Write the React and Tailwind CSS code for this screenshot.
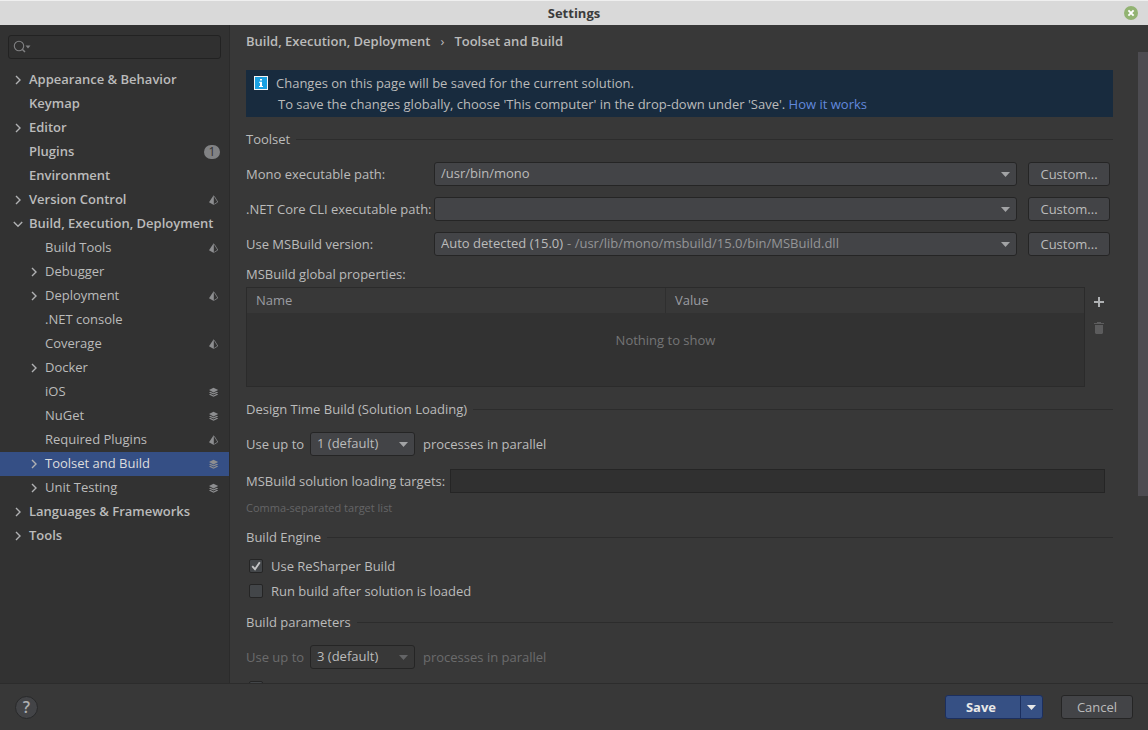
import { useState } from 'react'
import clsx from 'clsx'

const TREE = [
  { label: 'Appearance & Behavior', arrow: 'right' },
  { label: 'Keymap' },
  { label: 'Editor', arrow: 'right' },
  { label: 'Plugins', badge: 1 },
  { label: 'Environment' },
  { label: 'Version Control', arrow: 'right', mark: 'project' },
  { label: 'Build, Execution, Deployment', arrow: 'down' },
  { label: 'Build Tools', child: true, mark: 'project' },
  { label: 'Debugger', child: true, arrow: 'right' },
  { label: 'Deployment', child: true, arrow: 'right', mark: 'project' },
  { label: '.NET console', child: true },
  { label: 'Coverage', child: true, mark: 'project' },
  { label: 'Docker', child: true, arrow: 'right' },
  { label: 'iOS', child: true, mark: 'layers' },
  { label: 'NuGet', child: true, mark: 'layers' },
  { label: 'Required Plugins', child: true, mark: 'project' },
  { label: 'Toolset and Build', child: true, arrow: 'right', mark: 'layers' },
  { label: 'Unit Testing', child: true, arrow: 'right', mark: 'layers' },
  { label: 'Languages & Frameworks', arrow: 'right' },
  { label: 'Tools', arrow: 'right' },
]

function Chevron({ dir }) {
  if (!dir) return null
  return (
    <svg width="10" height="10" viewBox="0 0 10 10" fill="none" stroke="#b0b1b3" strokeWidth="1.4">
      {dir === 'right' ? <path d="M3 1 7 5 3 9" /> : <path d="M.8 3 5 7.2 9.2 3" />}
    </svg>
  )
}

function Mark({ type }) {
  if (type === 'project') {
    return (
      <svg width="10" height="10" viewBox="0 0 10 10">
        <path d="M4.8 0V10L0 7.2Z" fill="#8d8e90" />
        <path d="M5.2 1.2 8.8 7 5.2 9.3" fill="none" stroke="#77787a" strokeWidth="1" />
      </svg>
    )
  }
  if (type === 'layers') {
    return (
      <svg width="10" height="10" viewBox="0 0 10 10" fill="#8d8e90">
        <path d="M4.5 .7 9.2 3.1 4.5 5.5 0 3.1Z" />
        <path d="M0 5.4 1.3 4.7 4.5 6.3 7.8 4.7 9.2 5.4 4.5 7.6Z" />
        <path d="M0 7.5 1.3 6.8 4.5 8.4 7.8 6.8 9.2 7.5 4.5 9.7Z" />
      </svg>
    )
  }
  return null
}

function Caret({ color = '#a2a3a5' }) {
  return (
    <svg className="pointer-events-none shrink-0" width="9" height="5" viewBox="0 0 9 5">
      <path d="M0 0H9L4.5 5Z" fill={color} />
    </svg>
  )
}

function Combo({ id, options, hint, disabled, className }) {
  return (
    <div
      className={clsx(
        'relative flex h-6 items-center rounded-[3px] border border-[#252525]',
        disabled ? 'bg-[#383838]' : 'bg-[#434447]',
        className
      )}
    >
      <select
        id={id}
        disabled={disabled}
        className={clsx(
          'h-full appearance-none bg-transparent pb-0.5 pl-1.5 text-[#bbbbbb] opacity-100 outline-none',
          hint ? 'field-sizing-content' : 'w-full'
        )}
      >
        {options.map(o => <option key={o}>{o}</option>)}
      </select>
      {hint && <span className="truncate pb-0.5 pl-1 text-[#949597]">{hint}</span>}
      <span className="pointer-events-none absolute right-1.5">
        <Caret color={disabled ? '#636466' : undefined} />
      </span>
    </div>
  )
}

function Section({ title, className }) {
  return (
    <div className={clsx('flex items-center gap-1.5', className)}>
      <h2>{title}</h2>
      <div className="h-px flex-1 bg-[#2c2c2c]" />
    </div>
  )
}

function Check({ label, disabled, defaultChecked }) {
  const [on, setOn] = useState(!!defaultChecked)
  return (
    <label className={clsx('flex items-center gap-2 pl-[3px]', disabled && 'text-[#6b6b6c]')}>
      <span className="relative flex size-3.5">
        <input
          type="checkbox"
          checked={on}
          disabled={disabled}
          onChange={e => setOn(e.target.checked)}
          className="size-3.5 appearance-none rounded-[2px] border border-[#252525] bg-[#434649]"
        />
        {on && (
          <svg className="pointer-events-none absolute inset-0" width="14" height="14" viewBox="0 0 14 14" fill="none">
            <path d="M3.2 7.2 6 10.2 10.8 3.2" stroke="#c3c4c5" strokeWidth="1.9" />
          </svg>
        )}
      </span>
      {label}
    </label>
  )
}

function Button({ children, className }) {
  return (
    <button className={clsx('h-6 rounded-[3px] border border-[#252525] bg-[#434447] leading-5 text-[#bbbbbb]', className)}>
      {children}
    </button>
  )
}

function Sidebar() {
  const [selected, setSelected] = useState('Toolset and Build')
  return (
    <aside className="w-[230px] shrink-0 border-r border-[#2b2b2b] bg-[#323232]">
      <label className="mx-2 mt-2.5 flex h-6 items-center rounded-[3px] border border-[#222222] bg-[#303030] pl-1">
        <svg width="18" height="14" viewBox="0 0 18 14" fill="none">
          <circle cx="6" cy="6" r="4.7" stroke="#808183" strokeWidth="1.1" />
          <path d="M9.2 9.2 12 12" stroke="#808183" strokeWidth="1.5" />
          <path d="M12.5 5.5H17.5L15 8.5Z" fill="#808183" />
        </svg>
        <input type="text" aria-label="Search settings" className="min-w-0 flex-1 bg-transparent outline-none" />
      </label>
      <nav className="mt-[9px]">
        {TREE.map(item => (
          <button
            key={item.label}
            onClick={() => setSelected(item.label)}
            className={clsx(
              'flex h-6 w-full items-center pr-2.5 text-left leading-5',
              item.child ? 'pl-[29px]' : 'pl-[13px] font-semibold',
              item.label === selected ? 'bg-[#354f85] text-[#dddddd]' : 'text-[#bbbbbb]'
            )}
          >
            <span className="w-4 shrink-0"><Chevron dir={item.arrow} /></span>
            <span className="flex-1 pb-0.5 whitespace-nowrap">{item.label}</span>
            {item.badge && (
              <span className="-mr-px h-3.5 w-4 rounded-full bg-[#818284] text-center text-xs leading-3.5 font-normal text-[#323232]">
                {item.badge}
              </span>
            )}
            <Mark type={item.mark} />
          </button>
        ))}
      </nav>
    </aside>
  )
}

function Banner() {
  return (
    <div className="flex gap-2 bg-[#182b3e] px-2 pt-[3px] pb-0.5">
      <svg className="mt-[3px] shrink-0" width="14" height="14" viewBox="0 0 14 14">
        <rect x=".5" y=".5" width="13" height="13" fill="#1ba1e2" stroke="#f5f5f5" />
        <path d="M6 3H8V4.6H6ZM5 5.8H8V10H9V11H5V10H6V6.8H5Z" fill="#fff" />
      </svg>
      <p className="leading-[21px]">
        Changes on this page will be saved for the current solution.
        <br />
        <span className="pl-0.5">To save the changes globally, choose 'This computer' in the drop-down under 'Save'. </span>
        <a href="#how" className="text-[#6289dd]">How it works</a>
      </p>
    </div>
  )
}

function PropertiesTable() {
  return (
    <div className="mt-[3px] flex">
      <div className="h-[100px] flex-1 border border-[#2b2b2b] bg-[#323232]">
        <table className="w-full table-fixed text-left">
          <thead>
            <tr className="h-[25px] bg-[#383838] text-[#9b9ca2]">
              <th className="border-r border-[#2f2f2f] pb-0.5 pl-[9px] font-normal">Name</th>
              <th className="pb-0.5 pl-[9px] font-normal">Value</th>
            </tr>
          </thead>
          <tbody>
            <tr>
              <td colSpan="2" className="pt-[17px] text-center text-[#757576]">Nothing to show</td>
            </tr>
          </tbody>
        </table>
      </div>
      <div className="flex w-7 flex-col items-center gap-3 pt-2">
        <button aria-label="Add" className="size-3.5">
          <svg width="14" height="14" viewBox="0 0 14 14" fill="#afb1b3">
            <path d="M6 2H8V6H12V8H8V12H6V8H2V6H6Z" />
          </svg>
        </button>
        <button aria-label="Remove" disabled className="size-3.5">
          <svg width="14" height="14" viewBox="0 0 14 14" fill="#5c5c5d">
            <path d="M5 1H9V2H12V3H2V2H5ZM3 4H11V12L10 13H4L3 12Z" />
          </svg>
        </button>
      </div>
    </div>
  )
}

export default function App() {
  return (
    <div className="flex h-screen flex-col bg-[#383838] font-['Open_Sans',sans-serif] text-[13px] leading-5 text-[#bbbbbb]">
      {/* Title bar */}
      <header className="relative flex h-[25px] shrink-0 items-center justify-center border-t border-[#efefef] bg-[#d9d9d9]">
        <h1 className="font-bold text-[#3c3c3c]">Settings</h1>
        <button aria-label="Close" className="absolute right-2.5">
          <svg width="14" height="14" viewBox="0 0 14 14">
            <circle cx="7" cy="7" r="7" fill="#92b372" />
            <path d="M4.4 4.4 9.6 9.6M9.6 4.4 4.4 9.6" stroke="#fff" strokeWidth="1.9" />
          </svg>
        </button>
      </header>

      <div className="flex min-h-0 flex-1">
        <Sidebar />

        <main className="flex min-w-0 flex-1 flex-col">
          <div className="flex h-[27px] shrink-0 items-end gap-2.5 pb-px pl-4 font-semibold">
            <span>Build, Execution, Deployment</span>
            <span className="font-normal">›</span>
            <span>Toolset and Build</span>
          </div>

          <div className="flex min-h-0 flex-1">
            <div className="min-w-0 flex-1 overflow-hidden pt-[18px] pr-[25px] pl-4">
              <Banner />

              <Section title="Toolset" className="mt-3" />
              <div className="mt-[13px] grid grid-cols-[188px_1fr_82px] items-center gap-y-[11px] pr-[3px]">
                <label htmlFor="mono" className="whitespace-nowrap">Mono executable path:</label>
                <Combo id="mono" options={['/usr/bin/mono']} className="mr-[11px]" />
                <Button>Custom...</Button>
                <label htmlFor="cli" className="whitespace-nowrap">.NET Core CLI executable path:</label>
                <Combo id="cli" options={['']} className="mr-[11px]" />
                <Button>Custom...</Button>
                <label htmlFor="msbuild" className="whitespace-nowrap">Use MSBuild version:</label>
                <Combo
                  id="msbuild"
                  options={['Auto detected (15.0)']}
                  hint="- /usr/lib/mono/msbuild/15.0/bin/MSBuild.dll"
                  className="mr-[11px]"
                />
                <Button>Custom...</Button>
              </div>

              <p className="mt-2">MSBuild global properties:</p>
              <PropertiesTable />

              <Section title="Design Time Build (Solution Loading)" className="mt-3" />
              <div className="mt-[13px] flex items-center">
                <label htmlFor="load-procs" className="w-16 whitespace-nowrap">Use up to</label>
                <Combo id="load-procs" options={['1 (default)', '2', '3', '4']} className="mr-2 w-[105px]" />
                <span>processes in parallel</span>
              </div>
              <div className="mt-[13px] flex items-center pr-2">
                <label htmlFor="targets" className="w-[204px] whitespace-nowrap">MSBuild solution loading targets:</label>
                <input
                  id="targets"
                  type="text"
                  className="h-6 min-w-0 flex-1 border border-[#252525] bg-[#303030] px-1.5 outline-none"
                />
              </div>
              <p className="mt-[5px] text-[11px] leading-5 text-[#656567]">Comma-separated target list</p>

              <Section title="Build Engine" className="mt-[9px]" />
              <div className="mt-[9px] flex flex-col gap-[5px]">
                <Check label="Use ReSharper Build" defaultChecked />
                <Check label="Run build after solution is loaded" />
              </div>

              <Section title="Build parameters" className="mt-[11px]" />
              <div className="mt-[13px] flex items-center text-[#6b6b6c]">
                <label htmlFor="build-procs" className="w-16 whitespace-nowrap">Use up to</label>
                <Combo id="build-procs" options={['3 (default)']} disabled className="mr-2 w-[105px]" />
                <span>processes in parallel</span>
              </div>
              <div className="mt-[9px]">
                <Check label="Reuse running build nodes in parallel" disabled />
              </div>
            </div>

            {/* Scrollbar */}
            <div className="w-2.5 shrink-0">
              <div className="h-[444px] bg-[#4d4c51]" />
            </div>
          </div>
        </main>
      </div>

      <footer className="flex h-[47px] shrink-0 items-center border-t border-[#2c2c2c] pr-[15px] pl-[15px]">
        <button aria-label="Help" className="size-[23px] rounded-full border border-[#28292a] bg-[#434447] text-base leading-5 font-semibold text-[#afb0b2]">
          ?
        </button>
        <div className="ml-auto flex h-6 overflow-hidden rounded-[3px] border border-[#1c2f5e] bg-[#365084] text-[#e8e8e8]">
          <button className="w-[74px] pr-1 font-bold">Save</button>
          <button aria-label="More save options" className="flex w-[22px] items-center justify-center border-l border-[#1c2f5e]">
            <Caret color="#e8e8e8" />
          </button>
        </div>
        <Button className="ml-[18px] w-[72px]">Cancel</Button>
      </footer>
    </div>
  )
}
